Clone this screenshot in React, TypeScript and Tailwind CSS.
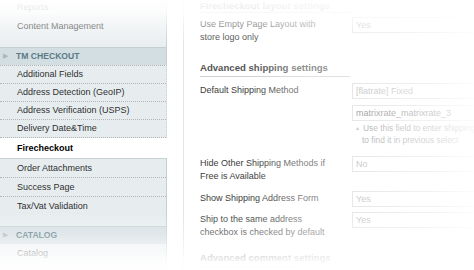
const font = "font-['Liberation_Sans',Arial,sans-serif]";

const topItems = ["Reports", "Content Management"];

const checkoutItems = [
  "Additional Fields",
  "Address Detection (GeoIP)",
  "Address Verification (USPS)",
  "Delivery Date&Time",
];

const checkoutItemsAfter = ["Order Attachments", "Success Page", "Tax/Vat Validation"];

export default function App() {
  return (
    <div className={`relative w-[474px] h-[270px] overflow-hidden bg-white ${font}`}>
      <div className="flex h-full">
        {/* Sidebar */}
        <aside className="w-[167px] shrink-0 text-[9px] text-[#2f2f2f]">
          {/* previous group */}
          <div className="h-[48px] bg-[#e9eef0] border-r border-b border-[#c6d0d3]">
            <div className="h-[15px] pl-[17px] leading-[15px]">{topItems[0]}</div>
            <div className="h-[22px] pl-[17px] leading-[22px]">{topItems[1]}</div>
          </div>

          {/* TM CHECKOUT */}
          <SectionHeader title="TM CHECKOUT" />
          <div className="bg-[#e7edef] border-r border-[#c6d0d3] border-t border-t-[#b5b5b5] border-dotted">
            {checkoutItems.map((item) => (
              <div
                key={item}
                className="h-[18px] pl-[17px] leading-[17px] border-b border-dotted border-[#b5b5b5]"
              >
                {item}
              </div>
            ))}
          </div>
          <div className="h-[20px] pl-[17px] leading-[20px] bg-white font-bold text-black">
            Firecheckout
          </div>
          <div className="bg-[#e7edef] border-r border-t border-b border-[#c6d0d3] pb-[10px]">
            {checkoutItemsAfter.map((item, i) => (
              <div
                key={item}
                className={`h-[19px] pl-[17px] leading-[18px] ${
                  i < checkoutItemsAfter.length - 1 ? "border-b border-dotted border-[#b5b5b5]" : ""
                }`}
              >
                {item}
              </div>
            ))}
          </div>

          {/* CATALOG */}
          <SectionHeader title="CATALOG" />
          <div className="bg-[#e9eef0] border-r border-[#c6d0d3] h-[30px]">
            <div className="h-[18px] pl-[17px] leading-[18px]">Catalog</div>
          </div>
        </aside>

        <div className="w-[16px] shrink-0" />

        {/* Main */}
        <main className="flex-1 flex flex-col border-l border-[#e4e4e4] pl-[16px] text-[9px] text-[#3c3c3c]">
          <Heading title="Firecheckout layout settings" />

          <Row className="mt-[4px]" label="Use Empty Page Layout with store logo only">
            <Field value="Yes" />
          </Row>

          <div className="mt-[18px] w-[150px] pb-[2px] border-b border-[#cfcfcf]">
            <h3 className="text-[9.6px] leading-[12px] font-bold text-[#555]">
              Advanced shipping settings
            </h3>
          </div>

          <Row className="mt-[6px]" label="Default Shipping Method">
            <Field value="[flatrate] Fixed" />
          </Row>

          <div className="mt-[6px] flex">
            <div className="w-[152px] shrink-0" />
            <div>
              <Field value="matrixrate_matrixrate_3" dark />
              <div className="mt-[1px] text-[8.4px] leading-[12px] text-[#888] whitespace-nowrap">
                <div className="flex items-center gap-[3px] pl-[3px]">
                  <span className="text-[5px] text-[#aaa]">▲</span>
                  <span>Use this field to enter shipping</span>
                </div>
                <div className="pl-[10px]">to find it in previous select</div>
              </div>
            </div>
          </div>

          <Row className="mt-[10px]" label="Hide Other Shipping Methods if Free is Available">
            <Field value="No" />
          </Row>

          <Row className="mt-[8px]" label="Show Shipping Address Form">
            <Field value="Yes" />
          </Row>

          <Row className="mt-[5px]" label="Ship to the same address checkbox is checked by default">
            <Field value="Yes" />
          </Row>

          <div className="mt-[13px] w-[150px] pb-[2px] border-b border-[#cfcfcf]">
            <h3 className="text-[9.6px] leading-[12px] font-bold text-[#555]">
              Advanced comment settings
            </h3>
          </div>
        </main>
      </div>

      {/* fade over the edges of the screenshot */}
      <div className="pointer-events-none absolute inset-0 bg-[linear-gradient(to_bottom,rgba(255,255,255,0.97)_0px,rgba(255,255,255,0.86)_12px,rgba(255,255,255,0.45)_25px,rgba(255,255,255,0)_45px,rgba(255,255,255,0)_212px,rgba(255,255,255,0.3)_234px,rgba(255,255,255,0.66)_250px,rgba(255,255,255,0.88)_260px,rgba(255,255,255,0.97)_270px)]" />
      <div className="pointer-events-none absolute inset-0 bg-[linear-gradient(to_right,rgba(255,255,255,0)_250px,rgba(255,255,255,0.35)_300px,rgba(255,255,255,0.4)_360px,rgba(255,255,255,0.7)_440px,rgba(255,255,255,0.93)_474px)]" />
    </div>
  );
}

function SectionHeader({ title }: { title: string }) {
  return (
    <div className="h-[17px] flex items-center bg-[#d3dee2] border-r border-[#c6d0d3]">
      <span className="w-[16px] pl-[3px] text-[7px] text-[#a9b6ba]">▶</span>
      <span className="text-[8.6px] font-bold text-[#5b7a86] leading-[17px]">{title}</span>
    </div>
  );
}

function Heading({ title }: { title: string }) {
  return (
    <div className="w-[150px] pb-[1px] border-b border-[#cfcfcf]">
      <h3 className="text-[9.6px] leading-[11px] font-bold text-[#555]">{title}</h3>
    </div>
  );
}

function Row({
  label,
  className,
  children,
}: {
  label: string;
  className?: string;
  children: React.ReactNode;
}) {
  return (
    <div className={`flex ${className ?? ""}`}>
      <div className="w-[152px] shrink-0">
        <div className="w-[138px] pt-[1px] leading-[13px]">{label}</div>
      </div>
      {children}
    </div>
  );
}

function Field({ value, dark }: { value: string; dark?: boolean }) {
  return (
    <div
      className={`w-[130px] h-[16px] px-[3px] border border-[#d8d8d8] bg-white text-[9px] leading-[14px] whitespace-nowrap overflow-hidden ${
        dark ? "text-[#666]" : "text-[#a8a8a8]"
      }`}
    >
      {value}
    </div>
  );
}
